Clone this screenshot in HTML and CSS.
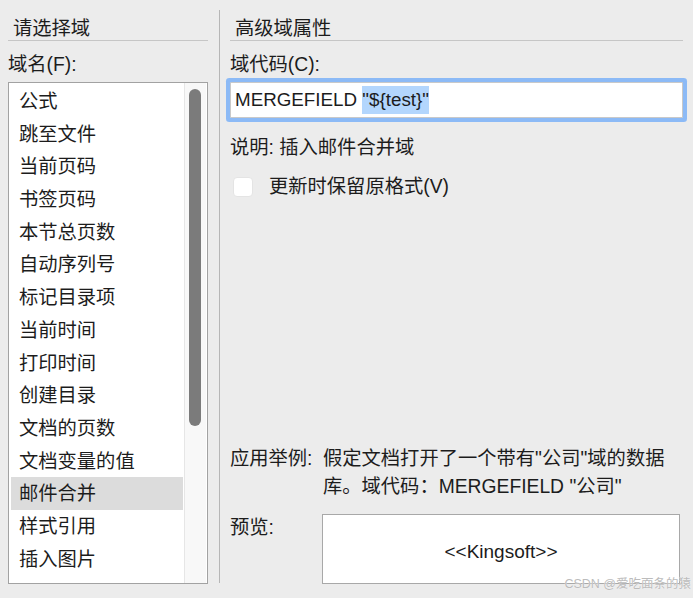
FILE: index.html
```html
<!DOCTYPE html>
<html lang="zh-CN">
<head>
<meta charset="utf-8">
<title>域</title>
<link rel="stylesheet" href="styles.css">
</head>
<body>
<div class="dialog">
  <section class="left">
    <div class="group-title">请选择域</div>
    <div class="label">域名(F):</div>
    <div class="listbox">
      <ul class="items">
        <li>公式</li>
        <li>跳至文件</li>
        <li>当前页码</li>
        <li>书签页码</li>
        <li>本节总页数</li>
        <li>自动序列号</li>
        <li>标记目录项</li>
        <li>当前时间</li>
        <li>打印时间</li>
        <li>创建目录</li>
        <li>文档的页数</li>
        <li>文档变量的值</li>
        <li class="selected">邮件合并</li>
        <li>样式引用</li>
        <li>插入图片</li>
      </ul>
      <div class="scrollbar"><div class="thumb"></div></div>
    </div>
  </section>
  <div class="divider"></div>
  <section class="right">
    <div class="group-title">高级域属性</div>
    <div class="label">域代码(C):</div>
    <div class="code-input">MERGEFIELD <span class="sel">"${test}"</span></div>
    <div class="desc">说明: 插入邮件合并域</div>
    <div class="check-row">
      <span class="checkbox"></span>
      <span class="check-label">更新时保留原格式(V)</span>
    </div>
    <div class="example">
      <div class="ex-label">应用举例:</div>
      <div class="ex-text">假定文档打开了一个带有"公司"域的数据<br>库。域代码：MERGEFIELD "公司"</div>
    </div>
    <div class="preview-row">
      <div class="pv-label">预览:</div>
      <div class="preview">&lt;&lt;Kingsoft&gt;&gt;</div>
    </div>
  </section>
  <div class="watermark">CSDN @爱吃面条的猿</div>
</div>
</body>
</html>
```
FILE: styles.css
```css
* { box-sizing: border-box; }
html, body {
  margin: 0;
  padding: 0;
  background: #ececec;
}
body {
  font-family: "Liberation Sans", "Noto Sans CJK SC", sans-serif;
  font-size: 19.3px;
  color: #1c1c1c;
}
.dialog {
  position: relative;
  display: flex;
  width: 693px;
  height: 598px;
  overflow: hidden;
}
.left {
  width: 200px;
  margin-left: 8px;
  display: flex;
  flex-direction: column;
}
.group-title {
  height: 41px;
  padding: 17px 0 0 5px;
  line-height: 24px;
  border-bottom: 1px solid #c6c6c6;
}
.label {
  margin-top: 12px;
  line-height: 24px;
  height: 24px;
}
.listbox {
  margin-top: 5px;
  height: 502px;
  border: 1px solid #a2a2a2;
  background: #fff;
  display: flex;
}
.items {
  list-style: none;
  margin: 0;
  padding: 2px 1px 0 2px;
  width: 175px;
  overflow: hidden;
}
.items li {
  height: 32.7px;
  line-height: 34px;
  padding-left: 8px;
  white-space: nowrap;
}
.items li.selected {
  background: #dcdcdc;
}
.scrollbar {
  width: 22px;
  background: #f8f8f8;
  border-left: 1px solid #e6e6e6;
  padding: 6px 0 0 4px;
}
.thumb {
  width: 12px;
  height: 337px;
  border-radius: 6px;
  background: #7b7b7b;
}
.divider {
  width: 1px;
  margin-left: 11px;
  margin-top: 10px;
  height: 573px;
  background: #b6b6b6;
}
.right {
  width: 453px;
  margin-left: 10px;
  display: flex;
  flex-direction: column;
}
.code-input {
  margin-top: 5px;
  height: 36px;
  background: #fff;
  border: 1px solid #c9c9c9;
  border-radius: 1px;
  box-shadow: 0 0 0 4px #8cbaf6;
  padding: 3px 0 0 4px;
  font-size: 18.8px;
  line-height: 28px;
  white-space: nowrap;
}
.sel {
  display: inline-block;
  background: #b3d6fd;
  line-height: 28px;
}
.desc {
  margin-top: 18px;
  line-height: 24px;
}
.check-row {
  margin-top: 15px;
  display: flex;
  align-items: center;
  height: 24px;
  padding-left: 3px;
  gap: 16px;
}
.checkbox {
  width: 20px;
  height: 20px;
  border-radius: 4px;
  background: #fff;
  border: 1px solid #e4e4e4;
}
.check-label {
  line-height: 24px;
}
.example {
  margin-top: auto;
  display: grid;
  grid-template-columns: 93px 1fr;
  line-height: 28px;
}
.ex-text {
  white-space: nowrap;
}
.preview-row {
  margin-top: 13px;
  margin-bottom: 14px;
  display: grid;
  grid-template-columns: 92px 358px;
}
.pv-label {
  padding-top: 2px;
  line-height: 24px;
}
.preview {
  height: 70px;
  background: #fff;
  border: 1px solid #a8a8a8;
  display: flex;
  align-items: center;
  justify-content: center;
  padding-top: 5px;
  font-size: 19px;
}
.watermark {
  position: absolute;
  right: 2px;
  bottom: 7px;
  font-size: 12.5px;
  line-height: 14px;
  color: #bcbcbc;
  text-shadow: 0 0 1px #fff;
  white-space: nowrap;
}
```
